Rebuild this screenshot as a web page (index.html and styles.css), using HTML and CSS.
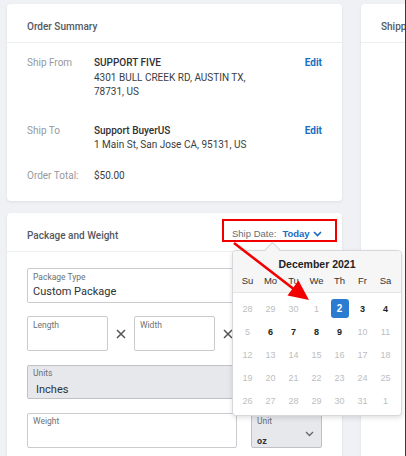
FILE: index.html
```html
<!DOCTYPE html>
<html>
<head>
<meta charset="utf-8">
<link rel="stylesheet" href="styles.css">
</head>
<body>
<div class="page">
  <div class="col-main">
    <section class="card summary">
      <div class="card-head"><span class="card-title">Order Summary</span></div>
      <div class="summary-body">
        <div class="row row-from">
          <div class="lbl">Ship From</div>
          <div class="val"><div class="strong">SUPPORT FIVE</div><div>4301 BULL CREEK RD, AUSTIN TX,</div><div>78731, US</div></div>
          <a class="edit">Edit</a>
        </div>
        <div class="row row-to">
          <div class="lbl">Ship To</div>
          <div class="val"><div class="strong">Support BuyerUS</div><div>1 Main St, San Jose CA, 95131, US</div></div>
          <a class="edit">Edit</a>
        </div>
        <div class="row row-total">
          <div class="lbl">Order Total:</div>
          <div class="val">$50.00</div>
        </div>
      </div>
    </section>

    <section class="card pkg">
      <div class="card-head">
        <span class="card-title">Package and Weight</span>
        <div class="shipdate">
          <span class="sd-label">Ship Date:</span>
          <span class="sd-value">Today</span>
          <svg class="sd-chev" width="9" height="6" viewBox="0 0 9 6"><path d="M1 1l3.5 3.5L8 1" fill="none" stroke="#1a6bc1" stroke-width="1.6"/></svg>
        </div>
      </div>
      <div class="pkg-body">
        <div class="field">
          <div class="f-label">Package Type</div>
          <div class="f-value">Custom Package</div>
        </div>
        <div class="dims">
          <div class="field dim"><div class="f-label">Length</div></div>
          <svg class="times" width="10" height="10" viewBox="0 0 10 10"><path d="M1 1l8 8M9 1l-8 8" stroke="#555" stroke-width="1.5"/></svg>
          <div class="field dim"><div class="f-label">Width</div></div>
          <svg class="times" width="10" height="10" viewBox="0 0 10 10"><path d="M1 1l8 8M9 1l-8 8" stroke="#555" stroke-width="1.5"/></svg>
          <div class="field dim"></div>
        </div>
        <div class="field grey units">
          <div class="f-label">Units</div>
          <div class="f-value f-units">Inches</div>
        </div>
        <div class="wrow">
          <div class="field weight"><div class="f-label">Weight</div></div>
          <div class="field grey unit">
            <div class="f-label">Unit</div>
            <div class="f-oz">oz</div>
            <svg class="unit-chev" width="9" height="6" viewBox="0 0 9 6"><path d="M1 1l3.5 3.5L8 1" fill="none" stroke="#666" stroke-width="1.3"/></svg>
          </div>
        </div>
      </div>

      <div class="calendar">
        <div class="cal-caret"></div>
        <div class="cal-head">
          <div class="cal-month">December 2021</div>
          <div class="cal-grid cal-dow">
            <span>Su</span><span>Mo</span><span>Tu</span><span>We</span><span>Th</span><span>Fr</span><span>Sa</span>
          </div>
        </div>
        <div class="cal-grid cal-days">
          <span class="off">28</span><span class="off">29</span><span class="off">30</span><span class="off">1</span><span class="sel">2</span><span class="on">3</span><span class="on">4</span>
          <span class="off">5</span><span class="on">6</span><span class="on">7</span><span class="on">8</span><span class="on">9</span><span class="off">10</span><span class="off">11</span>
          <span class="off">12</span><span class="off">13</span><span class="off">14</span><span class="off">15</span><span class="off">16</span><span class="off">17</span><span class="off">18</span>
          <span class="off">19</span><span class="off">20</span><span class="off">21</span><span class="off">22</span><span class="off">23</span><span class="off">24</span><span class="off">25</span>
          <span class="off">26</span><span class="off">27</span><span class="off">28</span><span class="off">29</span><span class="off">30</span><span class="off">31</span><span class="off">1</span>
        </div>
      </div>
    </section>
  </div>

  <div class="col-side">
    <section class="card side">
      <div class="card-head"><span class="card-title">Shipping</span></div>
    </section>
  </div>
</div>

<svg class="annot" width="406" height="456" viewBox="0 0 406 456">
  <line x1="234" y1="243" x2="295" y2="290" stroke="#f20000" stroke-width="2.6"/>
  <polygon points="309,300 287.5,295.5 298.5,280.5" fill="#f20000"/>
</svg>
<div class="edge"></div>
</body>
</html>
```

FILE: styles.css
```css
html, body {
  margin: 0;
  padding: 0;
}
body {
  width: 406px;
  height: 456px;
  overflow: hidden;
  background: #f0f1f4;
  font-family: Roboto, "Liberation Sans", sans-serif;
  color: #333;
  position: relative;
}
.page {
  display: flex;
  gap: 19px;
  padding: 4px 0 0 7px;
}
.col-main {
  width: 335px;
  flex: none;
  display: flex;
  flex-direction: column;
  gap: 12px;
  position: relative;
  z-index: 2;
}
.col-side {
  flex: none;
  width: 80px;
  position: relative;
  z-index: 1;
}
.card {
  background: #fff;
  border-radius: 4px;
  box-shadow: 0 1px 3px rgba(0, 0, 0, 0.08);
  position: relative;
}
.card-head {
  height: 39px;
  box-sizing: border-box;
  border-bottom: 1px solid #eceef0;
  display: flex;
  align-items: center;
  justify-content: space-between;
  padding: 6px 20px 0 20px;
}
.card-title {
  font-size: 10px;
  font-weight: 500;
  color: #545a62;
  white-space: nowrap;
}

/* summary */
.summary {
  height: 197px;
}
.summary-body {
  padding: 13px 20px 0 20px;
  font-size: 10px;
  line-height: 14.5px;
}
.row {
  display: flex;
}
.lbl {
  width: 67px;
  flex: none;
  color: #96999e;
}
.val {
  flex: 1;
  color: #3a3d42;
}
.strong {
  font-weight: 500;
  color: #2e3135;
}
.edit {
  color: #1a6bc1;
  font-weight: 700;
}
.row-to {
  margin-top: 24px;
}
.row-total {
  margin-top: 16px;
}

/* package */
.pkg {
  height: 260px;
}
.shipdate {
  flex: none;
  white-space: nowrap;
  margin-right: -15px;
  margin-top: -9px;
  border: 2px solid #f20000;
  height: 23px;
  box-sizing: border-box;
  padding: 6px 18px 0 8px;
  font-family: "Liberation Sans", Arial, sans-serif;
  font-size: 9.5px;
  line-height: 12px;
  display: flex;
  align-items: center;
  gap: 3px;
  width: 115px;
}
.sd-label {
  color: #6a6d72;
}
.sd-value {
  color: #1a6bc1;
  font-weight: 700;
  margin-left: 3px;
}
.sd-chev {
  flex: none;
}
.pkg-body {
  padding: 16px 20px 0 20px;
  display: flex;
  flex-direction: column;
  gap: 13px;
}
.field {
  height: 35px;
  box-sizing: border-box;
  border: 1px solid #c9cbcf;
  border-radius: 2px;
  padding: 3px 5px 0 5px;
  background: #fff;
  position: relative;
}
.f-label {
  font-size: 8.5px;
  line-height: 11px;
  color: #6c6f74;
}
.f-value {
  font-size: 11px;
  line-height: 16px;
  margin-top: 1px;
  color: #2e3135;
}
.dims {
  display: flex;
  align-items: center;
}
.dim {
  width: 81px;
  flex: none;
}
.times {
  width: 26px;
  flex: none;
  padding: 0 8px;
  box-sizing: border-box;
}
.grey {
  background: #e7e8ec;
  border-color: #bfc1c6;
}
.units {
  height: 34px;
  margin-top: 1px;
  padding-top: 2px;
}
.f-units {
  padding-left: 3px;
  margin-top: 3px;
}
.wrow {
  display: flex;
  gap: 14px;
  margin-top: 1px;
}
.weight {
  width: 210px;
  flex: none;
  padding-top: 2px;
}
.unit {
  width: 71px;
  flex: none;
  padding-top: 2px;
}
.f-oz {
  font-size: 9px;
  font-weight: 700;
  color: #333;
  margin-top: 9px;
  letter-spacing: 0.3px;
}
.unit-chev {
  position: absolute;
  right: 7px;
  top: 17px;
}

/* calendar */
.calendar {
  position: absolute;
  z-index: 5;
  left: 225px;
  top: 37px;
  width: 170px;
  height: 166px;
  box-sizing: border-box;
  background: #fff;
  border: 1px solid #d6d8db;
  border-radius: 4px;
  box-shadow: 0 2px 5px rgba(0, 0, 0, 0.12);
  font-family: "Liberation Sans", Arial, sans-serif;
}
.cal-caret {
  position: absolute;
  top: -7px;
  left: 34px;
  width: 10px;
  height: 10px;
  background: #f6f6f7;
  border-left: 1px solid #d6d8db;
  border-top: 1px solid #d6d8db;
  transform: rotate(45deg);
}
.cal-head {
  background: #f6f6f7;
  border-bottom: 1px solid #e3e4e6;
  height: 42px;
  box-sizing: border-box;
  border-radius: 4px 4px 0 0;
  position: relative;
  padding-top: 6px;
}
.cal-month {
  text-align: center;
  font-size: 10.5px;
  font-weight: 700;
  color: #222;
  line-height: 14px;
}
.cal-grid {
  display: grid;
  grid-template-columns: repeat(7, 23px);
  padding: 0 3px;
}
.cal-grid span {
  text-align: center;
}
.cal-dow {
  margin-top: 3px;
  font-size: 9.5px;
  line-height: 14px;
  color: #333;
}
.cal-days {
  padding-top: 4px;
  grid-auto-rows: 23px;
  font-size: 9px;
}
.cal-days span {
  display: flex;
  align-items: center;
  justify-content: center;
}
.off {
  color: #bcbec2;
}
.on {
  color: #222;
  font-weight: 700;
}
.cal-days .sel {
  color: #fff;
  font-weight: 700;
  font-size: 10px;
  background: #2b7bd0;
  border-radius: 3px;
  margin: 2px 2.5px;
}

/* side */
.side {
  height: 600px;
  width: 80px;
}

.annot {
  position: absolute;
  z-index: 10;
  left: 0;
  top: 0;
  pointer-events: none;
}
.edge {
  position: absolute;
  z-index: 10;
  right: 0;
  top: 0;
  width: 1px;
  height: 456px;
  background: #3a3a3a;
}
```
